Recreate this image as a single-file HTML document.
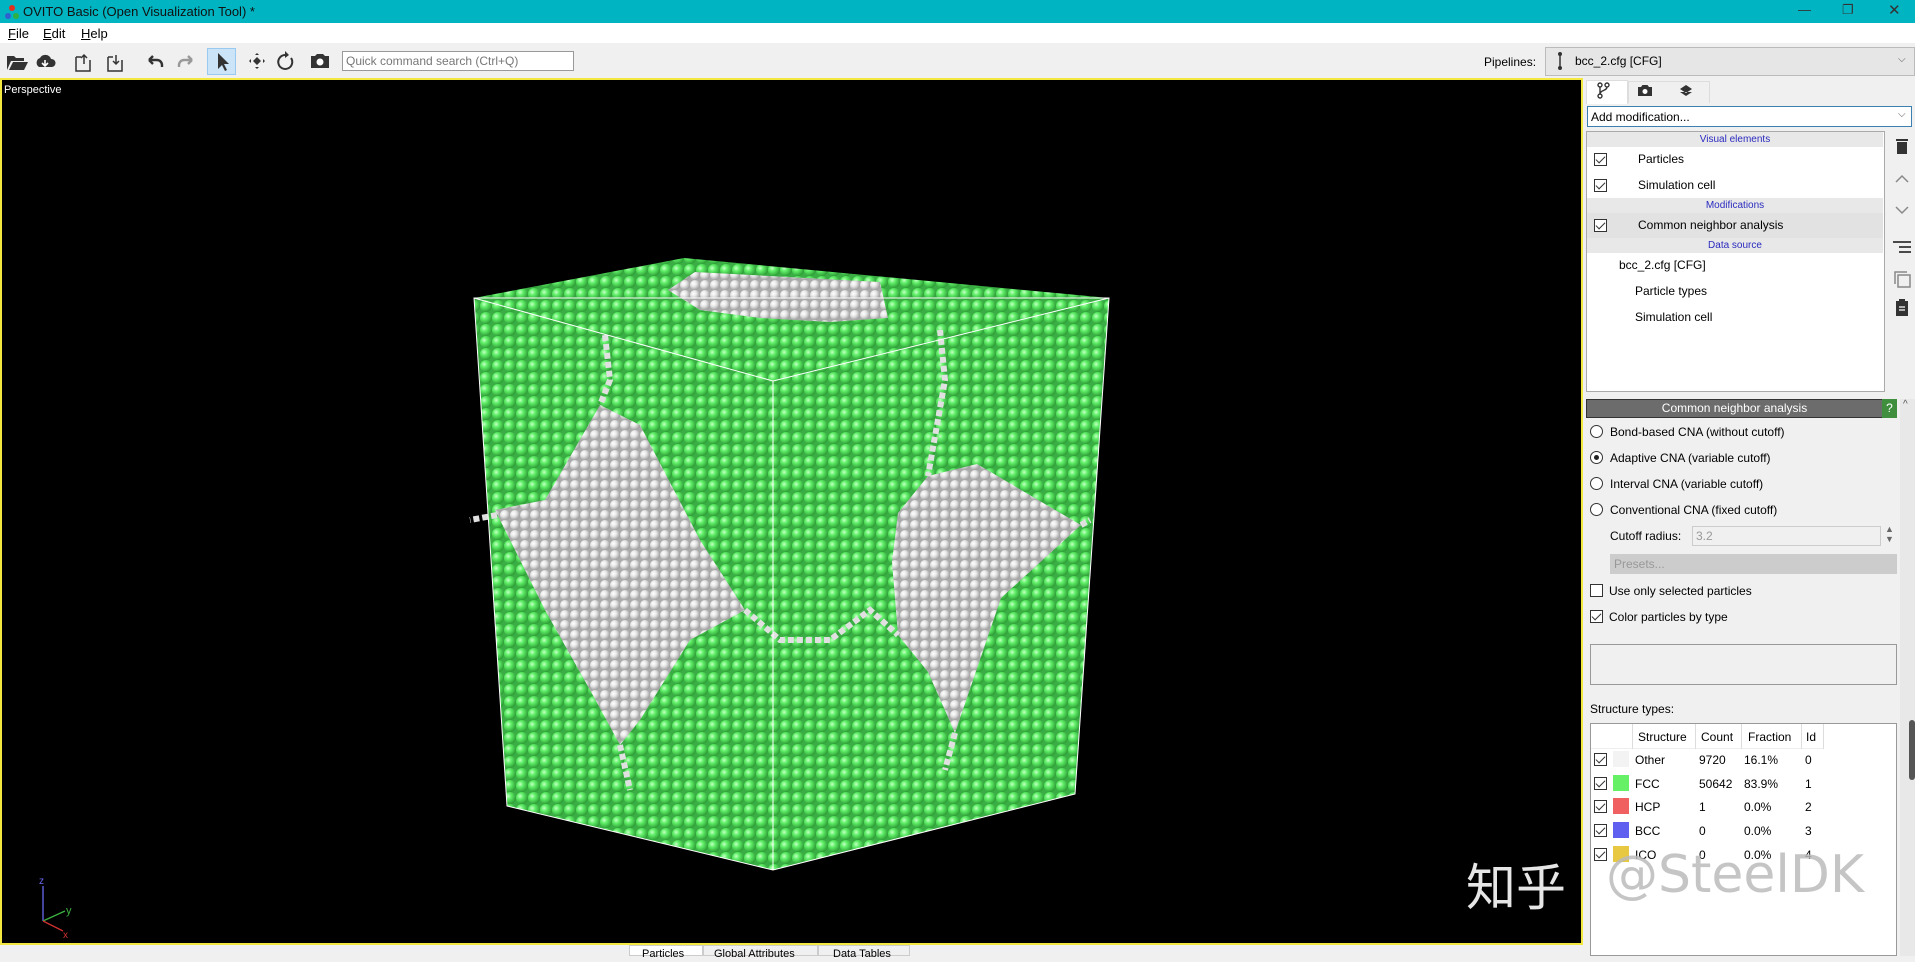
<!DOCTYPE html>
<html><head><meta charset="utf-8"><style>
*{margin:0;padding:0;box-sizing:border-box}
body{width:1915px;height:956px;overflow:hidden;background:#f0f0f0;font-family:"Liberation Sans","Noto Sans CJK SC",sans-serif;font-size:12px;color:#000;position:relative}
.a{position:absolute;white-space:nowrap}
.cb{position:absolute;width:13px;height:13px;border:1px solid #333;background:#fff}
.cb.on::after{content:"";position:absolute;left:3px;top:0px;width:4px;height:8px;border:solid #333;border-width:0 1.5px 1.5px 0;transform:rotate(45deg)}
.rb{position:absolute;width:13px;height:13px;border:1px solid #333;border-radius:50%;background:#fff}
.hdr{position:absolute;left:1587px;width:296px;height:15px;background:#e8e8e8;color:#2a2ac0;font-size:10px;text-align:center;line-height:15px}
</style></head><body>
<!-- title bar -->
<div class="a" style="left:0;top:0;width:1915px;height:23px;background:#00b4c2"></div>
<svg class="a" style="left:4px;top:4px" width="16" height="16"><circle cx="8" cy="4" r="3" fill="#e03020"/><circle cx="4" cy="12" r="3" fill="#3060d0"/><circle cx="12" cy="12" r="3" fill="#30b040"/></svg>
<div class="a" style="left:23px;top:4px;font-size:13px;color:#111">OVITO Basic (Open Visualization Tool) *</div>
<div class="a" style="left:1798px;top:2px;font-size:13px;color:#333">—</div>
<div class="a" style="left:1842px;top:2px;font-size:13px;color:#333">❐</div>
<div class="a" style="left:1888px;top:1px;font-size:15px;color:#333">✕</div>
<!-- menu -->
<div class="a" style="left:0;top:23px;width:1915px;height:20px;background:#fff"></div>
<div class="a" style="left:8px;top:26px;font-size:13px"><u>F</u>ile</div>
<div class="a" style="left:43px;top:26px;font-size:13px"><u>E</u>dit</div>
<div class="a" style="left:81px;top:26px;font-size:13px"><u>H</u>elp</div>
<!-- toolbar -->
<svg class="a" style="left:6px;top:51px" width="330" height="22" fill="#333">
<path d="M1 5h7l2 2h8v3H5l-4 9z M3 19l4-8h15l-4 8z"/>
<path d="M33 16a5 5 0 0 1 1-9 6 6 0 0 1 11 1 4 4 0 0 1 1 8z" /><path d="M39 9v6M36 12l3 3 3-3" stroke="#fff" stroke-width="1.6" fill="none"/>
<path d="M70 6v14h14V9M75 6h-5M78 4v9M75 7l3-3 3 3" stroke="#333" stroke-width="1.5" fill="none"/>
<path d="M102 6v14h14V9M107 6h-5M110 4v9M107 10l3 3 3-3" stroke="#333" stroke-width="1.5" fill="none"/>
<path d="M143 9h8a5 5 0 0 1 5 5v2M143 9l4-4M143 9l4 4" stroke="#333" stroke-width="2.4" fill="none"/>
<path d="M186 9h-8a5 5 0 0 0-5 5v2M186 9l-4-4M186 9l-4 4" stroke="#999" stroke-width="2.4" fill="none"/>
</svg>
<div class="a" style="left:207px;top:48px;width:29px;height:27px;background:#cce4f7;border:1px solid #99c9ef"></div>
<svg class="a" style="left:207px;top:48px" width="130" height="27" fill="#333">
<path d="M11 5v16l4-4 3 6 2-1-3-6h5z"/>
<path d="M46 13l4-4 4 4-4 4z M42 13l2-2v4z M58 13l-2-2v4z M50 5l-2 2h4z M50 21l-2-2h4z"/>
<path d="M78 7a7 7 0 1 0 6 3" stroke="#333" stroke-width="2" fill="none"/><path d="M78 3v7l4-3z"/>
<path d="M104 8h4l2-2h6l2 2h4v12h-18z"/><circle cx="113" cy="14" r="3.5" fill="#fff"/>
</svg>
<div class="a" style="left:342px;top:51px;width:232px;height:20px;background:#fff;border:1px solid #999;color:#777;font-size:12px;padding:2px 3px">Quick command search (Ctrl+Q)</div>
<div class="a" style="left:1484px;top:55px;font-size:12px">Pipelines:</div>
<div class="a" style="left:1545px;top:47px;width:370px;height:29px;background:#e6e6e6;border:1px solid #bbb"></div>
<svg class="a" style="left:1555px;top:51px" width="10" height="20"><circle cx="5" cy="3" r="2" fill="#333"/><circle cx="5" cy="17" r="2" fill="#333"/><path d="M5 3v14" stroke="#333" stroke-width="1.5"/></svg>
<div class="a" style="left:1575px;top:54px;font-size:12px">bcc_2.cfg [CFG]</div>
<div class="a" style="left:1898px;top:54px;font-size:10px;color:#555">⌵</div>
<!-- viewport -->
<div class="a" style="left:0;top:78px;width:1583px;height:867px;background:#000;border:2px solid #f2e840"></div>
<div class="a" style="left:4px;top:84px;color:#fff;font-size:11px">Perspective</div>
<svg class="a" style="left:0;top:0" width="1583" height="945">
<defs>
<radialGradient id="gb" cx="0.35" cy="0.35" r="0.7"><stop offset="0" stop-color="#c8ffc8"/><stop offset="0.35" stop-color="#62f06a"/><stop offset="1" stop-color="#2a9a32"/></radialGradient>
<radialGradient id="wb" cx="0.35" cy="0.35" r="0.7"><stop offset="0" stop-color="#ffffff"/><stop offset="0.4" stop-color="#e8e8e8"/><stop offset="1" stop-color="#9a9a9a"/></radialGradient>
<pattern id="pg" width="12" height="12" patternUnits="userSpaceOnUse"><rect width="12" height="12" fill="#3aae44"/><circle cx="6" cy="6" r="6" fill="url(#gb)"/></pattern>
<pattern id="pw" width="10" height="10" patternUnits="userSpaceOnUse"><rect width="10" height="10" fill="#aaa"/><circle cx="5" cy="5" r="5" fill="url(#wb)"/></pattern>
</defs>
<polygon points="474,298 684,258 1109,298 773,381" fill="url(#pg)"/>
<polygon points="474,298 773,381 773,870 507,806" fill="url(#pg)"/>
<polygon points="773,381 1109,298 1075,794 773,870" fill="url(#pg)"/>
<polygon points="668,290 695,272 880,282 888,318 830,322 760,318 700,310" fill="url(#pw)"/>
<polygon points="495,510 545,500 600,405 640,425 700,540 745,610 690,640 640,720 620,745 590,690 545,610" fill="url(#pw)"/>
<polygon points="898,513 928,476 977,464 1050,507 1081,525 1001,598 955,733 928,672 898,635 892,562" fill="url(#pw)"/>
<g stroke="#e0e0e0" stroke-width="6" fill="none" stroke-dasharray="6 3">
<polyline points="605,335 610,380 600,405"/>
<polyline points="940,330 945,380 928,476"/>
<polyline points="620,745 630,790"/>
<polyline points="745,610 780,640 830,640 870,610 898,635"/>
<polyline points="955,733 945,770"/>
<polyline points="497,515 470,520"/>
<polyline points="1081,525 1090,520"/>
</g>
<g stroke="#fff" stroke-width="1" fill="none"><polygon points="474,298 1109,298 1075,794 773,870 507,806"/><path d="M474,298 773,381 1109,298 M773,381 V870"/></g>
<g stroke-width="1.3" fill="none"><path d="M43 921V886" stroke="#6a6af0"/><path d="M43 921l22-10" stroke="#3cb040"/><path d="M43 921l20 10" stroke="#d03030"/></g>
<text x="39" y="884" fill="#6a6af0" font-size="10" font-family="Liberation Sans">z</text>
<text x="66" y="914" fill="#3cb040" font-size="11" font-family="Liberation Sans">y</text>
<text x="63" y="938" fill="#d03030" font-size="10" font-family="Liberation Sans">x</text>
</svg>
<div class="a" style="left:1466px;top:848px;font-size:50px;color:#fff;opacity:.9;font-family:'Noto Sans CJK SC',sans-serif">知乎</div>
<!-- bottom tabs -->
<div class="a" style="left:629px;top:945px;width:74px;height:11px;background:#fff;border:1px solid #ccc;font-size:11px;padding-left:12px;line-height:16px">Particles</div>
<div class="a" style="left:703px;top:945px;width:115px;height:11px;border:1px solid #ccc;font-size:11px;padding-left:10px;line-height:16px">Global Attributes</div>
<div class="a" style="left:818px;top:945px;width:92px;height:11px;border:1px solid #ccc;font-size:11px;padding-left:14px;line-height:16px">Data Tables</div>
<!-- right panel tabs -->
<div class="a" style="left:1586px;top:80px;width:42px;height:24px;background:#fff;border:1px solid #ddd;border-bottom:none"></div>
<div class="a" style="left:1628px;top:81px;width:82px;height:22px;border:1px solid #ddd;border-bottom:none"></div>
<svg class="a" style="left:1595px;top:81px" width="110" height="20" fill="#333">
<circle cx="5" cy="4" r="2" fill="none" stroke="#333" stroke-width="1.4"/><circle cx="5" cy="15" r="2" fill="none" stroke="#333" stroke-width="1.4"/><circle cx="12" cy="4" r="2" fill="none" stroke="#333" stroke-width="1.4"/><path d="M5 6v7M12 6c0 4-7 3-7 7" stroke="#333" stroke-width="1.4" fill="none"/>
<path d="M43 6h3l1.5-2h5L54 6h3v9H43z"/><circle cx="50" cy="10.5" r="2.5" fill="#fff"/>
<path d="M91 4l6 4-6 4-6-4z M85 11l6 4 6-4" /></svg>
<div class="a" style="left:1587px;top:106px;width:325px;height:21px;background:#fff;border:1px solid #3c7fb1;font-size:12px;padding:3px 3px">Add modification...</div>
<div class="a" style="left:1898px;top:109px;font-size:10px;color:#555">⌵</div>
<!-- pipeline list -->
<div class="a" style="left:1586px;top:131px;width:299px;height:261px;background:#fff;border:1px solid #aaa"></div>
<div class="hdr" style="top:132px">Visual elements</div>
<div class="cb on" style="left:1594px;top:153px"></div><div class="a" style="left:1638px;top:152px;font-size:12px">Particles</div>
<div class="cb on" style="left:1594px;top:179px"></div><div class="a" style="left:1638px;top:178px;font-size:12px">Simulation cell</div>
<div class="hdr" style="top:198px">Modifications</div>
<div class="a" style="left:1587px;top:213px;width:296px;height:25px;background:#e2e2e2"></div>
<div class="cb on" style="left:1594px;top:219px"></div><div class="a" style="left:1638px;top:218px;font-size:12px">Common neighbor analysis</div>
<div class="hdr" style="top:238px">Data source</div>
<div class="a" style="left:1619px;top:258px;font-size:12px">bcc_2.cfg [CFG]</div>
<div class="a" style="left:1635px;top:284px;font-size:12px">Particle types</div>
<div class="a" style="left:1635px;top:310px;font-size:12px">Simulation cell</div>
<svg class="a" style="left:1890px;top:135px" width="24" height="185" fill="#333">
<path d="M6 4h12v2H6z M7 7h10v12H7z"/>
<path d="M6 47l6-6 6 6" stroke="#888" stroke-width="1.5" fill="none"/>
<path d="M6 72l6 6 6-6" stroke="#888" stroke-width="1.5" fill="none"/>
<path d="M3 107h18M9 112h12M9 117h12" stroke="#333" stroke-width="1.8"/>
<rect x="8" y="140" width="12" height="12" fill="none" stroke="#888" stroke-width="1.5"/><path d="M5 149V137h12" stroke="#888" stroke-width="1.5" fill="none"/>
<path d="M6 166h12v15H6z"/><rect x="9" y="164" width="6" height="4" fill="#333"/><path d="M9 172h6M9 175h6" stroke="#fff" stroke-width="1.3"/>
</svg>
<!-- CNA panel -->
<div class="a" style="left:1586px;top:399px;width:297px;height:19px;background:#6c6c6c;border:1px solid #333;color:#fff;text-align:center;font-size:12px;line-height:17px">Common neighbor analysis</div>
<div class="a" style="left:1882px;top:399px;width:15px;height:19px;background:#3f8f3f;color:#fff;text-align:center;font-size:12px;line-height:19px">?</div>
<div class="a" style="left:1900px;top:399px;width:15px;height:557px;background:#e8e8e8"></div>
<div class="a" style="left:1903px;top:399px;font-size:10px;color:#555">^</div>
<div class="a" style="left:1909px;top:720px;width:6px;height:60px;background:#555;border-radius:3px"></div>
<div class="rb" style="left:1590px;top:425px"></div><div class="a" style="left:1610px;top:425px">Bond-based CNA (without cutoff)</div>
<div class="rb" style="left:1590px;top:451px"></div><div class="a" style="left:1594px;top:455px;width:5px;height:5px;background:#222;border-radius:50%"></div><div class="a" style="left:1610px;top:451px">Adaptive CNA (variable cutoff)</div>
<div class="rb" style="left:1590px;top:477px"></div><div class="a" style="left:1610px;top:477px">Interval CNA (variable cutoff)</div>
<div class="rb" style="left:1590px;top:503px"></div><div class="a" style="left:1610px;top:503px">Conventional CNA (fixed cutoff)</div>
<div class="a" style="left:1610px;top:529px">Cutoff radius:</div>
<div class="a" style="left:1692px;top:526px;width:189px;height:20px;background:#f0f0f0;border:1px solid #ccc;color:#999;padding:2px 3px">3.2</div>
<div class="a" style="left:1885px;top:524px;font-size:9px;color:#666;line-height:10px">▲<br>▼</div>
<div class="a" style="left:1610px;top:554px;width:287px;height:20px;background:#ccc;color:#999;padding:3px 4px">Presets...</div>
<div class="cb" style="left:1590px;top:584px"></div><div class="a" style="left:1609px;top:584px">Use only selected particles</div>
<div class="cb on" style="left:1590px;top:610px"></div><div class="a" style="left:1609px;top:610px">Color particles by type</div>
<div class="a" style="left:1590px;top:644px;width:307px;height:41px;border:1px solid #999"></div>
<div class="a" style="left:1590px;top:702px">Structure types:</div>
<div class="a" style="left:1590px;top:723px;width:307px;height:233px;background:#fff;border:1px solid #999"></div>
<div class="a" style="left:1591px;top:724px;width:232px;height:25px;border-bottom:1px solid #eee"></div>
<div class="a" style="left:1632px;top:724px;width:1px;height:25px;background:#ddd"></div>
<div class="a" style="left:1695px;top:724px;width:1px;height:25px;background:#ddd"></div>
<div class="a" style="left:1741px;top:724px;width:1px;height:25px;background:#ddd"></div>
<div class="a" style="left:1801px;top:724px;width:1px;height:25px;background:#ddd"></div>
<div class="a" style="left:1823px;top:724px;width:1px;height:25px;background:#ddd"></div>
<div class="a" style="left:1638px;top:730px">Structure</div><div class="a" style="left:1701px;top:730px">Count</div><div class="a" style="left:1748px;top:730px">Fraction</div><div class="a" style="left:1806px;top:730px">Id</div>
<div class="cb on" style="left:1594px;top:753px"></div><div class="a" style="left:1613px;top:751px;width:16px;height:16px;background:#f3f3f3"></div><div class="a" style="left:1635px;top:753px">Other</div><div class="a" style="left:1699px;top:753px">9720</div><div class="a" style="left:1744px;top:753px">16.1%</div><div class="a" style="left:1805px;top:753px">0</div>
<div class="cb on" style="left:1594px;top:777px"></div><div class="a" style="left:1613px;top:775px;width:16px;height:16px;background:#66f066"></div><div class="a" style="left:1635px;top:777px">FCC</div><div class="a" style="left:1699px;top:777px">50642</div><div class="a" style="left:1744px;top:777px">83.9%</div><div class="a" style="left:1805px;top:777px">1</div>
<div class="cb on" style="left:1594px;top:800px"></div><div class="a" style="left:1613px;top:798px;width:16px;height:16px;background:#f06060"></div><div class="a" style="left:1635px;top:800px">HCP</div><div class="a" style="left:1699px;top:800px">1</div><div class="a" style="left:1744px;top:800px">0.0%</div><div class="a" style="left:1805px;top:800px">2</div>
<div class="cb on" style="left:1594px;top:824px"></div><div class="a" style="left:1613px;top:822px;width:16px;height:16px;background:#6060f0"></div><div class="a" style="left:1635px;top:824px">BCC</div><div class="a" style="left:1699px;top:824px">0</div><div class="a" style="left:1744px;top:824px">0.0%</div><div class="a" style="left:1805px;top:824px">3</div>
<div class="cb on" style="left:1594px;top:848px"></div><div class="a" style="left:1613px;top:846px;width:16px;height:16px;background:#e8c840"></div><div class="a" style="left:1635px;top:848px">ICO</div><div class="a" style="left:1699px;top:848px">0</div><div class="a" style="left:1744px;top:848px">0.0%</div><div class="a" style="left:1805px;top:848px">4</div>
<div class="a" style="left:1606px;top:845px;font-size:52px;color:#bbb;opacity:.85;font-family:'DejaVu Sans',sans-serif">@SteelDK</div>
</body></html>
